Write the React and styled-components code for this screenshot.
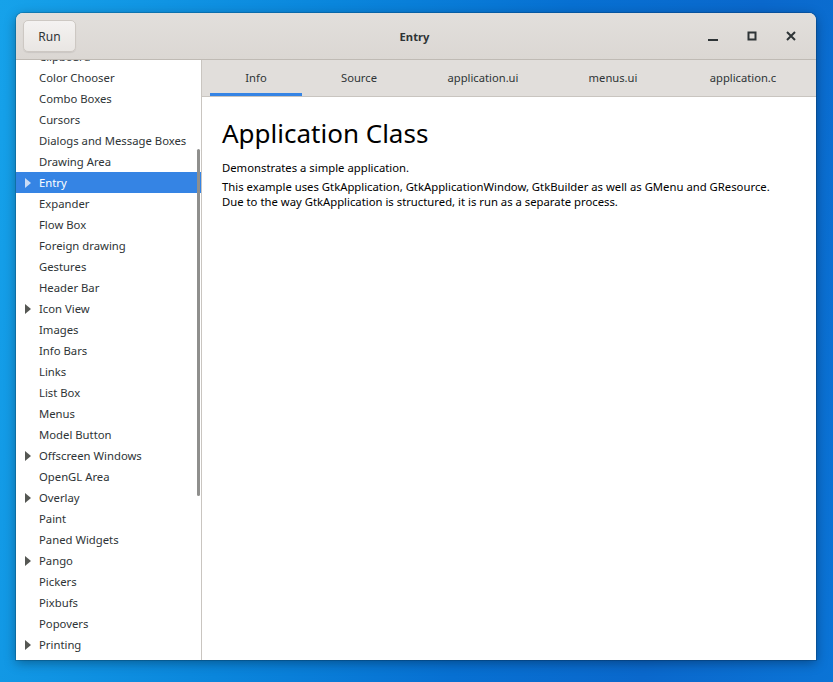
import React from "react";
import styled, { createGlobalStyle } from "styled-components";

const GlobalStyle = createGlobalStyle`
  html, body { margin: 0; padding: 0; }
  body { font-family: "Noto Sans", "DejaVu Sans", sans-serif; }
  #root { height: 682px; }
`;

const demos = [
  { name: "Clipboard" },
  { name: "Color Chooser" },
  { name: "Combo Boxes" },
  { name: "Cursors" },
  { name: "Dialogs and Message Boxes" },
  { name: "Drawing Area" },
  { name: "Entry", expander: true, selected: true },
  { name: "Expander" },
  { name: "Flow Box" },
  { name: "Foreign drawing" },
  { name: "Gestures" },
  { name: "Header Bar" },
  { name: "Icon View", expander: true },
  { name: "Images" },
  { name: "Info Bars" },
  { name: "Links" },
  { name: "List Box" },
  { name: "Menus" },
  { name: "Model Button" },
  { name: "Offscreen Windows", expander: true },
  { name: "OpenGL Area" },
  { name: "Overlay", expander: true },
  { name: "Paint" },
  { name: "Paned Widgets" },
  { name: "Pango", expander: true },
  { name: "Pickers" },
  { name: "Pixbufs" },
  { name: "Popovers" },
  { name: "Printing", expander: true },
];

const tabs = [
  { label: "Info", width: 92, active: true },
  { label: "Source", width: 114 },
  { label: "application.ui", width: 134 },
  { label: "menus.ui", width: 126 },
  { label: "application.c", width: 134 },
];

const Desktop = styled.div`
  height: 682px;
  box-sizing: border-box;
  padding: 13px 17px 22px 16px;
  background: linear-gradient(100deg, #16a2ea 0%, #0a86dc 35%, #0770d2 60%, #0a68cc 80%, #0b74d6 100%);
  overflow: hidden;
`;

const Window = styled.div`
  width: 800px;
  height: 647px;
  display: flex;
  flex-direction: column;
  background: #ffffff;
  border-radius: 7px 7px 0 0;
  overflow: hidden;
  box-shadow: 0 3px 12px rgba(0, 0, 0, 0.35), 0 0 0 1px rgba(0, 0, 0, 0.15);
`;

const HeaderBar = styled.div`
  height: 46px;
  flex: none;
  display: flex;
  align-items: center;
  padding: 0 6px 0 7px;
  background: linear-gradient(#e2dfdc, #dbd7d3);
  border-bottom: 1px solid #bfbab4;
`;

const RunButton = styled.button`
  width: 53px;
  height: 32px;
  border: 1px solid #cdc8c3;
  border-radius: 5px;
  background: linear-gradient(#f4f2f1, #e9e6e3);
  box-shadow: 0 1px 1px rgba(0, 0, 0, 0.08);
  font-family: "Noto Sans", sans-serif;
  font-size: 12px;
  color: #2e3436;
  padding: 0;
`;

const Title = styled.div`
  flex: 1;
  text-align: center;
  font-size: 11.2px;
  font-weight: bold;
  color: #2e3436;
  padding-left: 60px;
`;

const Controls = styled.div`
  display: flex;
  align-items: center;
`;

const ControlButton = styled.div`
  width: 39px;
  height: 30px;
  display: flex;
  align-items: center;
  justify-content: center;
  color: #2e3436;
`;

const Body = styled.div`
  flex: 1;
  display: flex;
  min-height: 0;
`;

const Sidebar = styled.div`
  width: 185px;
  flex: none;
  border-right: 1px solid #c9c5c0;
  position: relative;
  overflow: hidden;
  background: #ffffff;
`;

const List = styled.div`
  margin-top: -14px;
`;

const Row = styled.div`
  height: 21px;
  display: flex;
  align-items: center;
  font-size: 11.3px;
  color: ${(p) => (p.$selected ? "#ffffff" : "#2e3436")};
  background: ${(p) => (p.$selected ? "#3584e4" : "transparent")};
`;

const Arrow = styled.span`
  width: 23px;
  flex: none;
  display: flex;
  justify-content: center;
  padding-left: 1px;
  box-sizing: border-box;
  &::before {
    content: "";
    display: ${(p) => (p.$show ? "block" : "none")};
    border-left: 6px solid ${(p) => (p.$light ? "#c9dcf6" : "#555753")};
    border-top: 5px solid transparent;
    border-bottom: 5px solid transparent;
  }
`;

const Scrollbar = styled.div`
  position: absolute;
  right: 1px;
  top: 89px;
  width: 3px;
  height: 347px;
  border-radius: 2px;
  background: #8f8f8d;
`;

const Main = styled.div`
  flex: 1;
  display: flex;
  flex-direction: column;
  min-width: 0;
`;

const TabBar = styled.div`
  height: 36px;
  flex: none;
  display: flex;
  padding-left: 8px;
  background: #e1dedb;
  border-bottom: 1px solid #c9c5c0;
`;

const Tab = styled.div`
  width: ${(p) => p.$width}px;
  display: flex;
  align-items: center;
  justify-content: center;
  box-sizing: border-box;
  font-size: 11.2px;
  color: #2e3436;
  padding-top: 1px;
  border-bottom: 3px solid ${(p) => (p.$active ? "#3584e4" : "transparent")};
`;

const Content = styled.div`
  padding: 20px 20px;
  color: #000000;
`;

const Heading = styled.h1`
  margin: 0 0 11px 0;
  font-size: 26px;
  font-weight: normal;
  line-height: 32px;
`;

const Paragraph = styled.p`
  margin: 0 0 4px 0;
  font-size: 11.3px;
  line-height: 15px;
`;

export default function App() {
  return (
    <>
      <GlobalStyle />
      <Desktop>
        <Window>
          <HeaderBar>
            <RunButton>Run</RunButton>
            <Title>Entry</Title>
            <Controls>
              <ControlButton>
                <svg width="12" height="12" viewBox="0 0 12 12">
                  <rect x="1" y="9" width="10" height="2" fill="currentColor" />
                </svg>
              </ControlButton>
              <ControlButton>
                <svg width="12" height="12" viewBox="0 0 12 12">
                  <rect x="2.5" y="2.5" width="7" height="7" fill="none" stroke="currentColor" strokeWidth="2" />
                </svg>
              </ControlButton>
              <ControlButton>
                <svg width="12" height="12" viewBox="0 0 12 12">
                  <path d="M2 2 L10 10 M10 2 L2 10" stroke="currentColor" strokeWidth="2" />
                </svg>
              </ControlButton>
            </Controls>
          </HeaderBar>
          <Body>
            <Sidebar>
              <List>
                {demos.map((d) => (
                  <Row key={d.name} $selected={d.selected}>
                    <Arrow $show={d.expander} $light={d.selected} />
                    {d.name}
                  </Row>
                ))}
              </List>
              <Scrollbar />
            </Sidebar>
            <Main>
              <TabBar>
                {tabs.map((t) => (
                  <Tab key={t.label} $width={t.width} $active={t.active}>
                    {t.label}
                  </Tab>
                ))}
              </TabBar>
              <Content>
                <Heading>Application Class</Heading>
                <Paragraph>Demonstrates a simple application.</Paragraph>
                <Paragraph>
                  This example uses GtkApplication, GtkApplicationWindow, GtkBuilder as well as GMenu and GResource.
                  <br />
                  Due to the way GtkApplication is structured, it is run as a separate process.
                </Paragraph>
              </Content>
            </Main>
          </Body>
        </Window>
      </Desktop>
    </>
  );
}
